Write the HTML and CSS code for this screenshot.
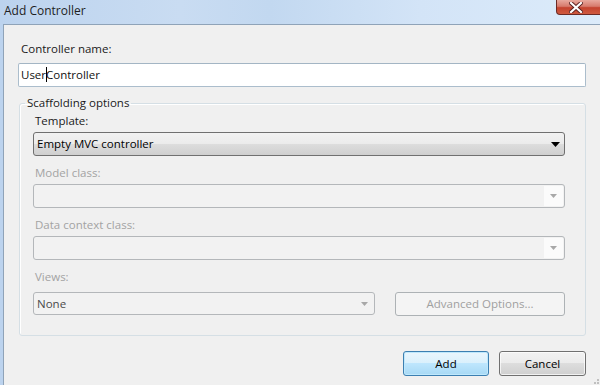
FILE: index.html
```html
<!DOCTYPE html>
<html>
<head>
<meta charset="utf-8">
<link rel="stylesheet" href="styles.css">
</head>
<body>
<div class="window">
  <div class="titlebar">
    <span class="title">Add Controller</span>
    <div class="close">
      <svg width="14" height="11" viewBox="0 0 14 11"><path d="M2 1 L12 10 M12 1 L2 10" stroke="#5a2020" stroke-width="4" stroke-linecap="square"/><path d="M2 1 L12 10 M12 1 L2 10" stroke="#ffffff" stroke-width="2.2" stroke-linecap="square"/></svg>
    </div>
  </div>
  <div class="client">
    <div class="label">Controller name:</div>
    <div class="textbox">User<span class="caret"></span>Controller</div>
    <fieldset class="group">
      <legend class="legend">Scaffolding options</legend>
      <div class="label">Template:</div>
      <div class="combo active">
        <span class="value">Empty MVC controller</span>
        <span class="arrow"><svg width="9" height="5" viewBox="0 0 9 5"><path d="M0 0 H9 L4.5 5 Z" fill="#000"/></svg></span>
      </div>
      <div class="label disabled gap">Model class:</div>
      <div class="combo off">
        <span class="value"></span>
        <span class="arrow white"><svg width="7" height="4" viewBox="0 0 7 4"><path d="M0 0 H7 L3.5 4 Z" fill="#a8a8a8"/></svg></span>
      </div>
      <div class="label disabled gap">Data context class:</div>
      <div class="combo off">
        <span class="value"></span>
        <span class="arrow white"><svg width="7" height="4" viewBox="0 0 7 4"><path d="M0 0 H7 L3.5 4 Z" fill="#a8a8a8"/></svg></span>
      </div>
      <div class="label disabled gap2">Views:</div>
      <div class="viewsrow">
        <div class="combo off views">
          <span class="value dark">None</span>
          <span class="arrow"><svg width="7" height="4" viewBox="0 0 7 4"><path d="M0 0 H7 L3.5 4 Z" fill="#a8a8a8"/></svg></span>
        </div>
        <div class="btn-disabled">Advanced Options...</div>
      </div>
    </fieldset>
    <div class="buttons">
      <div class="btn default">Add</div>
      <div class="btn">Cancel</div>
    </div>
    <svg class="grip" width="10" height="10" viewBox="0 0 10 10"><g fill="#c0c0c0"><rect x="7" y="1" width="2" height="2"/><rect x="4" y="4" width="2" height="2"/><rect x="7" y="4" width="2" height="2"/><rect x="1" y="7" width="2" height="2"/><rect x="4" y="7" width="2" height="2"/><rect x="7" y="7" width="2" height="2"/></g></svg>
  </div>
</div>
</body>
</html>
```
FILE: styles.css
```css
html, body {
  margin: 0;
  padding: 0;
}
body {
  width: 600px;
  height: 385px;
  overflow: hidden;
  font-family: "Open Sans", "Noto Sans", sans-serif;
  font-size: 11.5px;
  color: #1a1a1a;
}
.window {
  width: 600px;
  height: 385px;
  display: flex;
  flex-direction: column;
  background: linear-gradient(90deg, #bcd3ee 0%, #c9dcf2 30%, #c2d8f0 45%, #d3e4f7 70%, #dcebfa 100%);
  overflow: hidden;
}
.titlebar {
  height: 24px;
  display: flex;
  justify-content: space-between;
  align-items: flex-start;
  flex-shrink: 0;
}
.title {
  font-size: 12px;
  color: #1e1e1e;
  padding-left: 4px;
  line-height: 22px;
}
.close {
  width: 46px;
  height: 15px;
  margin-right: -2px;
  border: 1px solid #6b2a25;
  border-top: none;
  border-radius: 0 0 0 4px;
  background: linear-gradient(180deg, #e8a99e 0%, #d77b6d 45%, #c4432f 55%, #cf5a3f 100%);
  display: flex;
  justify-content: center;
  align-items: center;
  box-sizing: border-box;
  padding-right: 6px;
}
.client {
  position: relative;
  flex: 1;
  margin-left: 3px;
  border-left: 1px solid #8fa3b8;
  border-top: 1px solid #8fa3b8;
  background: #f0f0f0;
  padding: 16px 14px 0 14px;
  display: flex;
  flex-direction: column;
}
.label {
  line-height: 16px;
  height: 16px;
  padding-left: 3px;
}
.label.disabled {
  color: #a3a3a3;
}
.label.gap {
  margin-top: 9px;
}
.label.gap2 {
  margin-top: 9px;
}
.textbox {
  margin-top: 6px;
  height: 24px;
  box-sizing: border-box;
  border: 1px solid #abbdcc;
  border-top-color: #a3b5c4;
  border-radius: 2px;
  background: #fff;
  padding-left: 2px;
  line-height: 22px;
  font-size: 11.5px;
  color: #111;
}
.caret {
  display: inline-block;
  width: 1px;
  height: 15px;
  background: #000;
  vertical-align: -3px;
  margin-right: -1px;
}
.group {
  margin: 8px 0 0 1px;
  border: 1px solid #d5dfe5;
  border-radius: 3px;
  padding: 2px 20px 19px 13px;
  min-width: 0;
  box-shadow: inset 1px 1px 0 #ffffff;
}
.legend {
  padding: 0 2px;
  margin-left: -8px;
  line-height: 16px;
  color: #1a1a1a;
}
.group .label {
  padding-left: 2px;
}
.combo {
  margin-top: 3px;
  height: 24px;
  box-sizing: border-box;
  display: flex;
  align-items: stretch;
  border-radius: 3px;
}
.combo .value {
  flex: 1;
  line-height: 22px;
  padding-left: 3px;
}
.combo .arrow {
  width: 19px;
  display: flex;
  align-items: center;
  justify-content: center;
}
.combo.active {
  border: 1px solid #707070;
  background: linear-gradient(180deg, #f2f2f2 0%, #ebebeb 50%, #dddddd 50%, #cfcfcf 100%);
  color: #000;
}
.combo.active .arrow {
  width: 18px;
}
.combo.off {
  border: 1px solid #b4b7ba;
  background: #f2f2f2;
}
.combo.off .arrow.white {
  background: #fbfbfb;
  margin: 1px;
}
.value.dark {
  color: #4a4a4a;
}
.viewsrow {
  margin-top: 7px;
  display: flex;
  align-items: flex-start;
  gap: 20px;
}
.viewsrow .combo.views {
  margin-top: 0;
  width: 342px;
  height: 23px;
  flex-shrink: 0;
}
.viewsrow .combo.views .value {
  line-height: 21px;
}
.btn-disabled {
  flex: 1;
  height: 24px;
  box-sizing: border-box;
  border: 1px solid #adb2b5;
  border-radius: 3px;
  background: #f4f4f4;
  color: #a0a0a0;
  text-align: center;
  line-height: 22px;
}
.buttons {
  margin-top: 15px;
  display: flex;
  justify-content: flex-end;
  gap: 10px;
}
.btn {
  width: 87px;
  height: 25px;
  box-sizing: border-box;
  border: 1px solid #707070;
  border-radius: 3px;
  background: linear-gradient(180deg, #f2f2f2 0%, #ebebeb 50%, #dddddd 50%, #cfcfcf 100%);
  text-align: center;
  line-height: 23px;
  color: #000;
  box-shadow: inset 0 0 0 1px rgba(255,255,255,0.7);
}
.btn.default {
  width: 86px;
  border-color: #3c7fb1;
  background: linear-gradient(180deg, #eaf6fd 0%, #d9f0fc 50%, #bee6fd 50%, #a7d9f5 100%);
  box-shadow: inset 0 0 0 1px #bfe8fc;
}
.grip {
  position: absolute;
  right: 0;
  bottom: -3px;
}
```
